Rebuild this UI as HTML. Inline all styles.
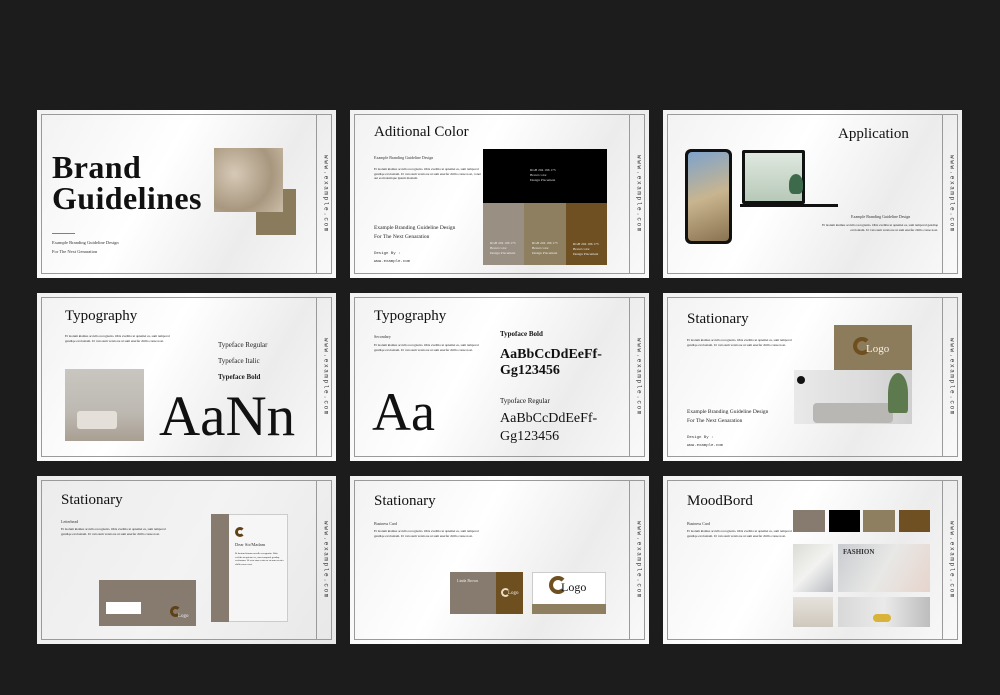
<!DOCTYPE html>
<html><head><meta charset="utf-8"><style>
*{margin:0;padding:0;box-sizing:border-box}
body{width:1000px;height:695px;background:#1c1c1c;position:relative;overflow:hidden;font-family:"Liberation Serif",serif;color:#111}
.s{position:absolute;width:299px;height:168px;background:linear-gradient(120deg,#f2f2f2 0%,#fff 40%,#ececec 70%,#fafafa 100%);overflow:hidden}
.s .b{position:absolute;left:4px;top:4px;right:4px;bottom:4px;border:1px solid #9a9a9a}
.s .v{position:absolute;left:279px;top:4px;bottom:4px;border-left:1px solid #9a9a9a}
.s .u{position:absolute;left:289px;top:84px;transform:translate(-50%,-50%) rotate(90deg);font-size:6px;letter-spacing:1.6px;white-space:nowrap;font-family:"Liberation Mono",monospace;color:#333}
.a{position:absolute}
.t{position:absolute;font-size:15px;white-space:nowrap}
.p{position:absolute;font-size:3.3px;line-height:4.6px;color:#222;width:108px}
.sm{position:absolute;font-size:4.5px;color:#333;white-space:nowrap}
.md{position:absolute;font-size:5.5px;line-height:9px;color:#222;white-space:nowrap}
</style></head><body>

<!-- Row 1 -->
<div class="s" style="left:37px;top:110px">
<div class="b"></div><div class="v"></div><div class="u">www.example.com</div>
<div class="a" style="left:15px;top:42px;font-size:32px;font-weight:bold;line-height:31px;letter-spacing:0.4px">Brand<br>Guidelines</div>
<div class="a" style="left:219px;top:79px;width:40px;height:46px;background:#8a7b5c"></div>
<div class="a" style="left:177px;top:38px;width:69px;height:64px;background:radial-gradient(circle at 30% 40%,#d6c9b6,#a8977f 60%,#cbbda9)"></div>
<div class="a" style="left:15px;top:123px;width:23px;height:1px;background:#a07a4a"></div>
<div class="sm" style="left:15px;top:128px;line-height:9px">Example Branding Guideline Design<br>For The Next Genaration</div>
</div>

<div class="s" style="left:350px;top:110px">
<div class="b"></div><div class="v"></div><div class="u">www.example.com</div>
<div class="t" style="left:24px;top:14px">Aditional Color</div>
<div class="sm" style="left:24px;top:45px;font-size:4px">Example Branding Guideline Design</div>
<div class="p" style="left:24px;top:57px">Et laoium kiamus accullo recognatio. Obis evelitia ut apiemet es, sum temporal gendiqe evolontam. Ut veta sum versia ne ut sum enerfer chilla conse nost, conet aut es molestique ipsum maxiem.</div>
<div class="md" style="left:24px;top:114px">Example Branding Guideline Design<br>For The Next Genaration</div>
<div class="sm" style="left:24px;top:140px;line-height:8px;font-family:'Liberation Mono',monospace;font-size:4px">Design By :<br>www.example.com</div>
<div class="a" style="left:133px;top:39px;width:124px;height:54px;background:#000"></div>
<div class="a" style="left:133px;top:93px;width:41px;height:62px;background:#9a8f83"></div>
<div class="a" style="left:174px;top:93px;width:42px;height:62px;background:#8d7f5f"></div>
<div class="a" style="left:216px;top:93px;width:41px;height:62px;background:#6e5022"></div>
<div class="sm" style="left:180px;top:58px;color:#ddd;font-size:3.5px;line-height:5px">RGB 204 196 175<br>Brand color<br>Design Placement</div>
<div class="sm" style="left:140px;top:131px;color:#eee;font-size:3.5px;line-height:5px">RGB 204 196 175<br>Brand color<br>Design Placement</div>
<div class="sm" style="left:182px;top:131px;color:#eee;font-size:3.5px;line-height:5px">RGB 204 196 175<br>Brand color<br>Design Placement</div>
<div class="sm" style="left:223px;top:132px;color:#eee;font-size:3.5px;line-height:5px">RGB 204 196 175<br>Brand color<br>Design Placement</div>
</div>

<div class="s" style="left:663px;top:110px">
<div class="b"></div><div class="v"></div><div class="u">www.example.com</div>
<div class="t" style="left:175px;top:16px">Application</div>
<div class="a" style="left:22px;top:39px;width:47px;height:95px;background:#111;border-radius:6px"></div>
<div class="a" style="left:25px;top:42px;width:41px;height:89px;background:linear-gradient(160deg,#7ea3cc,#c8b58f 50%,#8a7250);border-radius:4px"></div>
<div class="a" style="left:79px;top:40px;width:63px;height:54px;background:#111;border-radius:2px"></div>
<div class="a" style="left:82px;top:43px;width:57px;height:48px;background:linear-gradient(#dfe8df,#b7c9b8)"></div>
<div class="a" style="left:126px;top:64px;width:14px;height:20px;background:#3e6a4c;border-radius:50% 50% 30% 30%"></div>
<div class="a" style="left:77px;top:94px;width:98px;height:3px;background:#111"></div>
<div class="sm" style="left:188px;top:104px;font-size:4px">Example Branding Guideline Design</div>
<div class="p" style="left:158px;top:113px;width:117px;text-align:right">Et laoium kiamus accullo recognatio. Obis evelitia ut apiemet es, sum temporal gendiqe evolontam. Ut veta sum versia ne ut sum enerfer chilla conse nost.</div>
</div>

<!-- Row 2 -->
<div class="s" style="left:37px;top:293px">
<div class="b"></div><div class="v"></div><div class="u">www.example.com</div>
<div class="t" style="left:28px;top:15px">Typography</div>
<div class="p" style="left:28px;top:41px">Et laoium kiamus accullo recognatio. Obis evelitia ut apiemet es, sum temporal gendiqe evolontam. Ut veta sum versia ne ut sum enerfer chilla conse nost.</div>
<div class="md" style="left:181px;top:44px;line-height:16px;font-size:7px">Typeface Regular<br>Typeface Italic<br><b>Typeface Bold</b></div>
<div class="a" style="left:28px;top:76px;width:79px;height:72px;background:linear-gradient(#c9c6c0 0%,#bdb9b2 60%,#a99f92 100%)"></div>
<div class="a" style="left:40px;top:118px;width:40px;height:18px;background:#e4e0d9;border-radius:3px"></div>
<div class="a" style="left:122px;top:92px;font-size:57px;line-height:64px">AaNn</div>
</div>

<div class="s" style="left:350px;top:293px">
<div class="b"></div><div class="v"></div><div class="u">www.example.com</div>
<div class="t" style="left:24px;top:15px">Typography</div>
<div class="sm" style="left:24px;top:41px;font-size:4px">Secondary</div>
<div class="p" style="left:24px;top:50px">Et laoium kiamus accullo recognatio. Obis evelitia ut apiemet es, sum temporal gendiqe evolontam. Ut veta sum versia ne ut sum enerfer chilla conse nost.</div>
<div class="a" style="left:22px;top:90px;font-size:54px;line-height:58px">Aa</div>
<div class="a" style="left:150px;top:37px;font-size:7px;font-weight:bold">Typoface Bold</div>
<div class="a" style="left:150px;top:54px;font-size:14px;font-weight:bold;line-height:16px">AaBbCcDdEeFf-<br>Gg123456</div>
<div class="a" style="left:150px;top:104px;font-size:7px">Typoface Regular</div>
<div class="a" style="left:150px;top:117px;font-size:14px;line-height:18px">AaBbCcDdEeFf-<br>Gg123456</div>
</div>

<div class="s" style="left:663px;top:293px">
<div class="b"></div><div class="v"></div><div class="u">www.example.com</div>
<div class="t" style="left:24px;top:18px">Stationary</div>
<div class="p" style="left:24px;top:45px">Et laoium kiamus accullo recognatio. Obis evelitia ut apiemet es, sum temporal gendiqe evolontam. Ut veta sum versia ne ut sum enerfer chilla conse nost.</div>
<div class="md" style="left:24px;top:115px">Example Branding Guideline Design<br>For The Next Genaration</div>
<div class="sm" style="left:24px;top:141px;line-height:8px;font-family:'Liberation Mono',monospace;font-size:4px">Design By :<br>www.example.com</div>
<div class="a" style="left:131px;top:77px;width:118px;height:54px;background:linear-gradient(90deg,#e9e9e9,#dcdcdc 60%,#cfcfcf)"></div>
<div class="a" style="left:150px;top:110px;width:80px;height:20px;background:#b9b7b3;border-radius:4px"></div>
<div class="a" style="left:225px;top:80px;width:20px;height:40px;background:#5d7a4f;border-radius:50% 50% 10% 10%"></div>
<div class="a" style="left:134px;top:83px;width:8px;height:8px;background:#111;border-radius:50%"></div>
<div class="a" style="left:171px;top:32px;width:78px;height:45px;background:#8c7c5b"></div>
<div class="a" style="left:190px;top:44px;width:18px;height:18px;border:4px solid #6e4f1f;border-right-color:transparent;border-radius:50%"></div>
<div class="a" style="left:203px;top:50px;font-size:11px;color:#f5f0e6">Logo</div>
</div>

<!-- Row 3 -->
<div class="s" style="left:37px;top:476px;background:linear-gradient(120deg,#ececec,#f3f3f3 50%,#e8e8e8)">
<div class="b"></div><div class="v"></div><div class="u">www.example.com</div>
<div class="t" style="left:24px;top:16px">Stationary</div>
<div class="sm" style="left:24px;top:43px;font-size:4px">Letterhead</div>
<div class="p" style="left:24px;top:51px">Et laoium kiamus accullo recognatio. Obis evelitia ut apiemet es, sum temporal gendiqe evolontam. Ut veta sum versia ne ut sum enerfer chilla conse nost.</div>
<div class="a" style="left:62px;top:104px;width:97px;height:46px;background:#877b6f"></div>
<div class="a" style="left:69px;top:126px;width:35px;height:12px;background:#fff"></div>
<div class="a" style="left:133px;top:130px;width:11px;height:11px;border:3px solid #5e4216;border-right-color:transparent;border-radius:50%"></div>
<div class="a" style="left:141px;top:138px;font-size:5px;color:#eee">Logo</div>
<div class="a" style="left:174px;top:38px;width:77px;height:108px;background:#f6f6f6;border:1px solid #ccc"></div>
<div class="a" style="left:174px;top:38px;width:18px;height:108px;background:#877b6f"></div>
<div class="a" style="left:198px;top:51px;width:10px;height:10px;border:3px solid #5e4216;border-right-color:transparent;border-radius:50%"></div>
<div class="sm" style="left:198px;top:66px;font-size:4.5px">Dear Sir/Madam</div>
<div class="p" style="left:198px;top:76px;width:50px;font-size:2.5px;line-height:3.5px">Et laoium kiamus accullo recognatio. Obis evelitia ut apiemet es, sum temporal gendiqe evolontam. Ut veta sum versia ne ut sum enerfer chilla conse nost.</div>
</div>

<div class="s" style="left:350px;top:476px">
<div class="b"></div><div class="v"></div><div class="u">www.example.com</div>
<div class="t" style="left:24px;top:17px">Stationary</div>
<div class="sm" style="left:24px;top:45px;font-size:4px">Business Card</div>
<div class="p" style="left:24px;top:53px">Et laoium kiamus accullo recognatio. Obis evelitia ut apiemet es, sum temporal gendiqe evolontam. Ut veta sum versia ne ut sum enerfer chilla conse nost.</div>
<div class="a" style="left:100px;top:96px;width:73px;height:42px;background:#877b6f"></div>
<div class="a" style="left:146px;top:96px;width:27px;height:42px;background:#6e4f1f"></div>
<div class="sm" style="left:107px;top:102px;color:#eee;font-size:4px">Linda Brown</div>
<div class="a" style="left:151px;top:112px;width:9px;height:9px;border:2px solid #e8dcc4;border-right-color:transparent;border-radius:50%"></div>
<div class="a" style="left:158px;top:115px;font-size:5px;color:#eee">Logo</div>
<div class="a" style="left:182px;top:96px;width:74px;height:42px;background:#fff;border:1px solid #ccc"></div>
<div class="a" style="left:182px;top:128px;width:74px;height:10px;background:#8d7f5f"></div>
<div class="a" style="left:199px;top:100px;width:18px;height:18px;border:4px solid #6e4f1f;border-right-color:transparent;border-radius:50%"></div>
<div class="a" style="left:211px;top:104px;font-size:12px">Logo</div>
</div>

<div class="s" style="left:663px;top:476px">
<div class="b"></div><div class="v"></div><div class="u">www.example.com</div>
<div class="t" style="left:24px;top:17px">MoodBord</div>
<div class="sm" style="left:24px;top:45px;font-size:4px">Business Card</div>
<div class="p" style="left:24px;top:53px">Et laoium kiamus accullo recognatio. Obis evelitia ut apiemet es, sum temporal gendiqe evolontam. Ut veta sum versia ne ut sum enerfer chilla conse nost.</div>
<div class="a" style="left:130px;top:34px;width:32px;height:22px;background:#877b6f"></div>
<div class="a" style="left:166px;top:34px;width:31px;height:22px;background:#000"></div>
<div class="a" style="left:200px;top:34px;width:32px;height:22px;background:#8d7f5f"></div>
<div class="a" style="left:236px;top:34px;width:31px;height:22px;background:#6e5022"></div>
<div class="a" style="left:130px;top:68px;width:40px;height:48px;background:linear-gradient(135deg,#dcdcd6,#f2f2f0 50%,#b9bcc2)"></div>
<div class="a" style="left:175px;top:68px;width:92px;height:48px;background:linear-gradient(120deg,#c9ccd0,#e8e8e6 50%,#e7d4cc)"></div>
<div class="a" style="left:180px;top:72px;font-size:7px;font-weight:bold;color:#333">FASHION</div>
<div class="a" style="left:130px;top:121px;width:40px;height:30px;background:linear-gradient(#e6e2dc,#cfc8be)"></div>
<div class="a" style="left:175px;top:121px;width:92px;height:30px;background:linear-gradient(90deg,#d8d8d8,#eaeaea 50%,#bdbdbd)"></div>
<div class="a" style="left:210px;top:138px;width:18px;height:8px;background:#d9b23a;border-radius:4px"></div>
</div>

</body></html>
